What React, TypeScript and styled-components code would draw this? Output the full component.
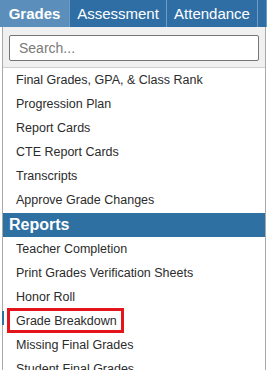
import styled, { createGlobalStyle } from "styled-components";

const Global = createGlobalStyle`
  html, body {
    margin: 0;
    padding: 0;
    background: #ffffff;
    font-family: "Liberation Sans", Arial, sans-serif;
  }
`;

const Page = styled.div`
  width: 267px;
  height: 370px;
  overflow: hidden;
  position: relative;
`;

const TabBar = styled.div`
  display: flex;
  height: 27px;
  background: #2e6ea5;
`;

const Tab = styled.div<{ $active?: boolean; $w: number }>`
  width: ${(p) => p.$w}px;
  flex-shrink: 0;
  display: flex;
  align-items: center;
  justify-content: center;
  color: #ffffff;
  font-size: 15px;
  font-weight: ${(p) => (p.$active ? 700 : 400)};
  background: ${(p) => (p.$active ? "#5b8eba" : "#2e6ea5")};
  border-right: 1px solid #6e9cc4;
  box-sizing: border-box;
`;

const Panel = styled.div`
  margin-left: 2px;
  width: 264px;
  border-left: 1px solid #a9a9a9;
  border-right: 1px solid #a9a9a9;
  box-sizing: border-box;
  background: #ffffff;
`;

const SearchArea = styled.div`
  background: #f0f0f0;
  padding: 8px 6px 6px 6px;
  border-bottom: 1px solid #cfcfcf;
`;

const SearchInput = styled.div`
  height: 26px;
  border: 1px solid #767676;
  border-radius: 2px;
  background: #ffffff;
  box-sizing: border-box;
  display: flex;
  align-items: center;
  padding-left: 9px;
  color: #7a7a7a;
  font-size: 14px;
`;

const List = styled.div`
  display: flex;
  flex-direction: column;
`;

const Item = styled.div`
  height: 24px;
  display: flex;
  align-items: center;
  padding-left: 13px;
  font-size: 12.5px;
  color: #2b2b2b;
  position: relative;
`;

const Header = styled.div`
  height: 24px;
  margin-top: 1px;
  display: flex;
  align-items: center;
  padding-left: 6px;
  background: #2f70a2;
  color: #ffffff;
  font-size: 16px;
  font-weight: 700;
`;

const Highlight = styled.span`
  position: absolute;
  left: 4px;
  top: -1px;
  width: 117px;
  height: 25px;
  border: 3px solid #e3141c;
  box-sizing: border-box;
`;

const SideMark = styled.span`
  position: absolute;
  left: -1px;
  top: 2px;
  width: 2px;
  height: 14px;
  background: #2f70a2;
`;

const grades = [
  "Final Grades, GPA, & Class Rank",
  "Progression Plan",
  "Report Cards",
  "CTE Report Cards",
  "Transcripts",
  "Approve Grade Changes",
];

const reports = [
  "Teacher Completion",
  "Print Grades Verification Sheets",
  "Honor Roll",
  "Grade Breakdown",
  "Missing Final Grades",
  "Student Final Grades",
];

export default function App() {
  return (
    <Page>
      <Global />
      <TabBar>
        <Tab $active $w={70}>Grades</Tab>
        <Tab $w={97}>Assessment</Tab>
        <Tab $w={91}>Attendance</Tab>
        <Tab $w={9} />
      </TabBar>
      <Panel>
        <SearchArea>
          <SearchInput>Search...</SearchInput>
        </SearchArea>
        <List>
          {grades.map((g) => (
            <Item key={g}>{g}</Item>
          ))}
          <Header>Reports</Header>
          {reports.map((r) => (
            <Item key={r}>
              {r === "Grade Breakdown" && (
                <>
                  <SideMark />
                  <Highlight />
                </>
              )}
              {r}
            </Item>
          ))}
        </List>
      </Panel>
    </Page>
  );
}
